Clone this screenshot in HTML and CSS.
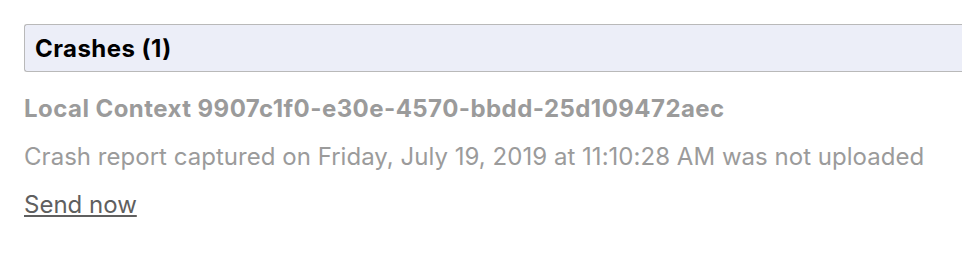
FILE: index.html
```html
<!DOCTYPE html>
<html lang="en">
<head>
<meta charset="utf-8">
<title>Crashes</title>
<link rel="stylesheet" href="styles.css">
</head>
<body>
<main class="page">
  <h2 class="section-title">Crashes (1)</h2>
  <div class="crash">
    <h3 class="crash-id">Local Context 9907c1f0-e30e-4570-bbdd-25d109472aec</h3>
    <p class="crash-info">Crash report captured on Friday, July 19, 2019 at 11:10:28 AM was not uploaded</p>
    <a class="send-link" href="#">Send now</a>
  </div>
</main>
</body>
</html>
```

FILE: styles.css
```css
html, body {
  margin: 0;
  padding: 0;
  background: #ffffff;
}
body {
  font-family: Inter, "Liberation Sans", sans-serif;
  font-size: 24px;
}
.page {
  padding: 24px 0 0 24px;
}
.section-title {
  margin: 0;
  box-sizing: border-box;
  height: 48px;
  display: flex;
  align-items: center;
  padding-left: 10px;
  background: #eceef8;
  border: 1px solid #b9b9b9;
  border-right: none;
  border-radius: 3px 0 0 3px;
  font-size: 24px;
  font-weight: 700;
  letter-spacing: 0.45px;
  color: #000000;
}
.crash {
  display: flex;
  flex-direction: column;
  align-items: flex-start;
  padding-top: 23px;
}
.crash-id {
  margin: 0;
  font-size: 24px;
  font-weight: 700;
  letter-spacing: 0.45px;
  line-height: 28px;
  color: #9b9b9b;
}
.crash-info {
  margin: 20px 0 0 0;
  font-size: 24px;
  line-height: 28px;
  letter-spacing: 0.03px;
  color: #9b9b9b;
}
.send-link {
  margin-top: 20px;
  font-size: 24px;
  line-height: 28px;
  color: #5f5f5f;
  text-decoration: underline;
}
```
